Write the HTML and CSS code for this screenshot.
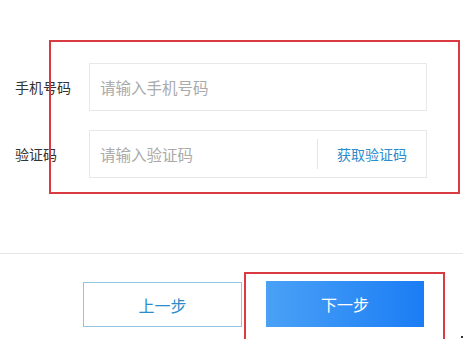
FILE: index.html
```html
<!DOCTYPE html>
<html lang="zh-CN">
<head>
<meta charset="utf-8">
<title>验证手机号</title>
<link rel="stylesheet" href="styles.css">
</head>
<body>
<div class="page">
  <div class="form">
    <div class="row">
      <label class="label">手机号码</label>
      <div class="field"><span class="placeholder">请输入手机号码</span></div>
    </div>
    <div class="row">
      <label class="label">验证码</label>
      <div class="field"><span class="placeholder grow">请输入验证码</span><span class="code">获取验证码</span></div>
    </div>
  </div>
  <div class="divider"></div>
  <div class="actions">
    <button class="btn btn-prev">上一步</button>
    <button class="btn btn-next">下一步</button>
  </div>
  <div class="mark mark-form"></div>
  <div class="mark mark-next"></div>
  <span class="dot"></span>
</div>
</body>
</html>
```
FILE: styles.css
```css
* { box-sizing: border-box; }
html, body { margin: 0; padding: 0; background: #fff; }
body {
  font-family: "Noto Sans CJK SC", "Noto Sans", sans-serif;
  width: 463px;
  height: 339px;
  overflow: hidden;
}
.page { position: relative; width: 463px; height: 339px; }
.form {
  padding-top: 63px;
  display: flex;
  flex-direction: column;
  gap: 19px;
}
.row { display: flex; align-items: center; }
.label {
  width: 89px;
  padding-left: 15px;
  font-size: 14px;
  color: #333;
  line-height: 20px;
}
.field {
  width: 338px;
  height: 48px;
  border: 1px solid #e8e8e8;
  display: flex;
  align-items: center;
  padding-left: 10px;
}
.placeholder { font-size: 15.5px; color: #aaa; line-height: 20px; }
.grow { flex: 1; }
.code {
  width: 109px;
  height: 30px;
  border-left: 1px solid #e6e6e6;
  display: flex;
  align-items: center;
  justify-content: center;
  font-size: 14px;
  color: #2b8ccb;
}
.divider {
  margin-top: 75px;
  height: 1px;
  background: #e6e6e6;
}
.actions {
  display: flex;
  gap: 24px;
  padding-left: 83px;
  margin-top: 27px;
}
.btn {
  width: 159px;
  height: 46px;
  font-family: inherit;
  font-size: 16px;
  padding: 0;
  cursor: pointer;
}
.btn-prev {
  background: #fff;
  border: 1px solid #93c4e2;
  color: #2b8ccb;
  margin-top: 1px;
  height: 45px;
}
.btn-next {
  width: 158px;
  border: none;
  color: #fff;
  background: linear-gradient(90deg, #4aa1f6 0%, #1b7df5 100%);
}
.mark {
  position: absolute;
  border: 2px solid #da3a42;
}
.mark-form { left: 49px; top: 40px; width: 411px; height: 154px; }
.mark-next { left: 244px; top: 272px; width: 201px; height: 80px; }
.dot {
  position: absolute;
  left: 461px;
  top: 336px;
  width: 2px;
  height: 2px;
  background: #333;
}
```
